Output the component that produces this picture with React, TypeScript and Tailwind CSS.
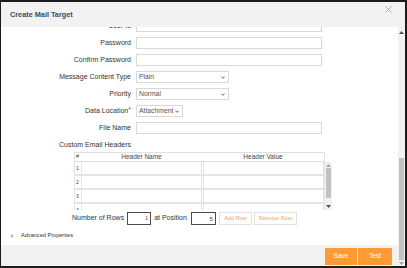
import React from "react";

const Chevron = () => (
  <svg width="4" height="3" viewBox="0 0 4 3" className="shrink-0">
    <polyline points="0.4,0.6 2,2.3 3.6,0.6" fill="none" stroke="#555" strokeWidth="0.9" />
  </svg>
);

const Label = ({ children }: { children: React.ReactNode }) => (
  <div className="w-[130px] shrink-0 text-right text-[7px] leading-[12px] text-[#333]">{children}</div>
);

const TextRow = ({ label, wide = true }: { label: React.ReactNode; wide?: boolean }) => (
  <div className="flex h-[12px] items-center">
    <Label>{label}</Label>
    <div className={`ml-[5px] h-[12px] ${wide ? "w-[186px]" : "w-[93px]"} border border-[#d9d9d9] bg-white`} />
  </div>
);

const SelectRow = ({ label, value, w }: { label: React.ReactNode; value: string; w: string }) => (
  <div className="flex h-[12px] items-center">
    <Label>{label}</Label>
    <div className={`ml-[5px] flex h-[12px] ${w} items-center justify-between border border-[#d9d9d9] bg-white pl-[2px] pr-[3px]`}>
      <span className="whitespace-nowrap text-[6.8px] leading-none text-[#555]">{value}</span>
      <Chevron />
    </div>
  </div>
);

const Up = ({ c = "#505050" }: { c?: string }) => (
  <svg width="5" height="3" viewBox="0 0 5 3"><polygon points="2.5,0 5,3 0,3" fill={c} /></svg>
);
const Down = ({ c = "#505050" }: { c?: string }) => (
  <svg width="5" height="3" viewBox="0 0 5 3"><polygon points="0,0 5,0 2.5,3" fill={c} /></svg>
);

const TableRow = ({ n }: { n: string }) => (
  <div className="flex h-[14px] border-x border-b-2 border-[#e4e4e4] bg-white">
    <div className="flex w-[6px] items-center pl-[1px] text-[5px] leading-none text-[#444]">{n}</div>
    <div className="h-full w-[121px] border-x border-[#e4e4e4]" />
    <div className="ml-[1px] h-full w-[121px] border-x border-[#e4e4e4]" />
  </div>
);

export default function App() {
  return (
    <div className="flex h-[268px] w-[407px] flex-col bg-[#1c1c1c] pb-[2px] pl-[1px] pr-[2px] pt-[2px] font-['Liberation_Sans',Arial,sans-serif]">
      {/* Header */}
      <div className="flex h-[25px] shrink-0 justify-between bg-[#f2f2f2] pl-[9px] pr-[13px]">
        <div className="self-center text-[7.3px] font-bold leading-none text-[#3d4c5e]">Create Mail Target</div>
        <svg width="7" height="7" viewBox="0 0 7 7" className="mt-[4px]">
          <line x1="0.5" y1="0.5" x2="6.5" y2="6.5" stroke="#9a9a9a" strokeWidth="0.8" />
          <line x1="6.5" y1="0.5" x2="0.5" y2="6.5" stroke="#9a9a9a" strokeWidth="0.8" />
        </svg>
      </div>

      <div className="flex min-h-0 flex-1">
        <div className="flex w-[397px] flex-col">
          {/* Body */}
          <div className="h-[218px] overflow-hidden bg-white">
            <div className="mt-[-7px] flex flex-col">
              <div className="flex flex-col gap-[5px]">
                <TextRow label="User Id" />
                <TextRow label="Password" />
                <TextRow label="Confirm Password" />
                <SelectRow label="Message Content Type" value="Plain" w="w-[93px]" />
                <SelectRow label="Priority" value="Normal" w="w-[93px]" />
                <SelectRow
                  label={
                    <>
                      Data Location<span className="relative top-[-1px] text-[#e0302a]">*</span>
                    </>
                  }
                  value="Attachment"
                  w="w-[47px]"
                />
                <TextRow label="File Name" />
                <div className="flex h-[12px] items-center">
                  <Label>Custom Email Headers</Label>
                </div>
              </div>

              {/* Table */}
              <div className="ml-[73px] mt-[1px] flex flex-col">
                <div className="flex h-[10px] w-[251px] items-center border border-[#e0e0e0] bg-white text-[6.5px] leading-none text-[#444]">
                  <div className="w-[6px] pl-[1px] text-[5.5px]">#</div>
                  <div className="w-[121px] text-center">Header Name</div>
                  <div className="w-[122px] text-center">Header Value</div>
                </div>
                <div className="flex h-[48px]">
                  <div className="h-[48px] w-[251px] overflow-hidden">
                    <TableRow n="1" />
                    <TableRow n="2" />
                    <TableRow n="3" />
                    <TableRow n="4" />
                  </div>
                  <div className="flex h-[48px] w-[7px] flex-col items-center bg-[#f1f1f1]">
                    <div className="flex h-[6px] items-center"><Up c="#a3a3a3" /></div>
                    <div className="h-[30px] w-[5px] bg-[#c1c1c1]" />
                    <div className="flex flex-1 items-end pb-[2px]"><Down /></div>
                  </div>
                </div>
              </div>

              {/* Number of rows */}
              <div className="ml-[71px] mt-[2px] flex h-[13px] items-center text-[7px] text-[#333]">
                <span>Number of Rows</span>
                <div className="ml-[3px] flex h-[13px] w-[24px] items-center justify-end border border-[#4a4a4a] pr-[2px] text-[5px] leading-none text-[#444]">1</div>
                <span className="ml-[3px]">at Position</span>
                <div className="ml-[4px] flex h-[13px] w-[25px] items-center justify-end border border-[#4a4a4a] pr-[2px] text-[6px] leading-none text-[#444]">5</div>
                <div className="ml-[3px] flex h-[13px] w-[33px] items-center justify-center border border-[#e2e2e2] bg-white text-[5.5px] leading-none text-[#f5a05a]">Add Row</div>
                <div className="ml-[2px] flex h-[13px] w-[43px] items-center justify-center border border-[#e2e2e2] bg-white text-[5.5px] leading-none text-[#f5a05a]">Remove Row</div>
              </div>

              {/* Advanced properties */}
              <div className="ml-[10px] mt-[6px] flex h-[10px] items-center">
                <svg width="3" height="4" viewBox="0 0 3 4"><polygon points="0,0 3,2 0,4" fill="#b5b5b5" /></svg>
                <span className="ml-[7px] text-[5.6px] leading-none text-[#333]">Advanced Properties</span>
              </div>
            </div>
          </div>

          {/* Footer */}
          <div className="flex h-[21px] shrink-0 items-start justify-end gap-[1px] bg-[#f2f2f2] pr-[6px] pt-[3px]">
            <div className="flex h-[17px] w-[32px] items-center justify-center bg-[#ff9a35] text-[6.6px] leading-none text-white">Save</div>
            <div className="flex h-[17px] w-[34px] items-center justify-center bg-[#ff9a35] text-[6.6px] leading-none text-white">Test</div>
          </div>
        </div>

        {/* Outer scrollbar */}
        <div className="flex w-[7px] flex-col items-center bg-[#f1f1f1]">
          <div className="flex h-[9px] items-center pt-[1px]"><Up /></div>
          <div className="flex w-full flex-1 flex-col items-center justify-end">
            <div className="h-[102px] w-[5px] bg-[#c1c1c1]" />
          </div>
          <div className="flex h-[6px] items-center"><Down c="#a3a3a3" /></div>
        </div>
      </div>
    </div>
  );
}
